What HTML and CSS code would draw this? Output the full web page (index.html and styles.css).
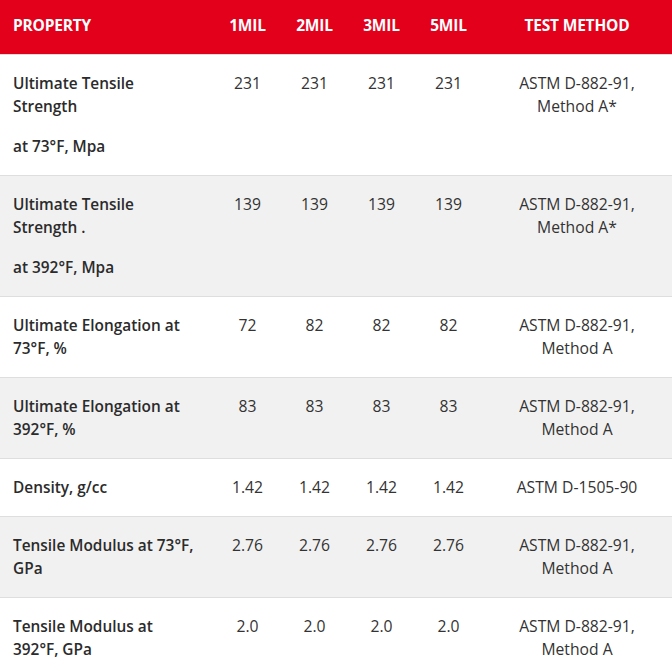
FILE: index.html
```html
<!DOCTYPE html>
<html>
<head>
<meta charset="utf-8">
<link rel="stylesheet" href="styles.css">
</head>
<body>
<table class="spec">
  <colgroup>
    <col class="c-prop"><col class="c-num"><col class="c-num"><col class="c-num"><col class="c-num"><col class="c-test">
  </colgroup>
  <thead>
    <tr>
      <th class="left">PROPERTY</th>
      <th>1MIL</th>
      <th>2MIL</th>
      <th>3MIL</th>
      <th>5MIL</th>
      <th>TEST METHOD</th>
    </tr>
  </thead>
  <tbody>
    <tr>
      <td class="left"><p>Ultimate Tensile<br>Strength</p><p>at 73°F, Mpa</p></td>
      <td>231</td><td>231</td><td>231</td><td>231</td>
      <td>ASTM D-882-91,<br>Method A*</td>
    </tr>
    <tr class="alt">
      <td class="left"><p>Ultimate Tensile<br>Strength .</p><p>at 392°F, Mpa</p></td>
      <td>139</td><td>139</td><td>139</td><td>139</td>
      <td>ASTM D-882-91,<br>Method A*</td>
    </tr>
    <tr>
      <td class="left">Ultimate Elongation at<br>73°F, %</td>
      <td>72</td><td>82</td><td>82</td><td>82</td>
      <td>ASTM D-882-91,<br>Method A</td>
    </tr>
    <tr class="alt">
      <td class="left">Ultimate Elongation at<br>392°F, %</td>
      <td>83</td><td>83</td><td>83</td><td>83</td>
      <td>ASTM D-882-91,<br>Method A</td>
    </tr>
    <tr>
      <td class="left">Density, g/cc</td>
      <td>1.42</td><td>1.42</td><td>1.42</td><td>1.42</td>
      <td>ASTM D-1505-90</td>
    </tr>
    <tr class="alt">
      <td class="left">Tensile Modulus at 73°F,<br>GPa</td>
      <td>2.76</td><td>2.76</td><td>2.76</td><td>2.76</td>
      <td>ASTM D-882-91,<br>Method A</td>
    </tr>
    <tr>
      <td class="left">Tensile Modulus at<br>392°F, GPa</td>
      <td>2.0</td><td>2.0</td><td>2.0</td><td>2.0</td>
      <td>ASTM D-882-91,<br>Method A</td>
    </tr>
  </tbody>
</table>
</body>
</html>
```
FILE: styles.css
```css
html, body {
  margin: 0;
  padding: 0;
  background: #fff;
}
body {
  font-family: "Open Sans", "Liberation Sans", sans-serif;
  color: #333;
}
.spec {
  width: 672px;
  border-collapse: collapse;
  table-layout: fixed;
}
.c-prop { width: 214px; }
.c-num { width: 67px; }
.c-test { width: 190px; }
.spec th {
  background: #e2001a;
  color: #fff;
  font-weight: 700;
  font-size: 15.5px;
  line-height: 22px;
  letter-spacing: -0.2px;
  padding: 14px 8px 18px;
  text-align: center;
}
.spec td {
  font-size: 15.7px;
  line-height: 23px;
  padding: 17px 8px 17px;
  text-align: center;
  vertical-align: top;
  border-top: 1px solid #dedede;
}
.spec td.left {
  font-weight: 600;
  font-size: 15.4px;
  color: #2b2b2b;
}
.spec .left {
  text-align: left;
  padding-left: 13px;
}
.spec tr.alt td {
  background: #f1f1f1;
}
.spec p {
  margin: 0 0 17px;
}
.spec p:last-child {
  margin-bottom: 0;
}
```
